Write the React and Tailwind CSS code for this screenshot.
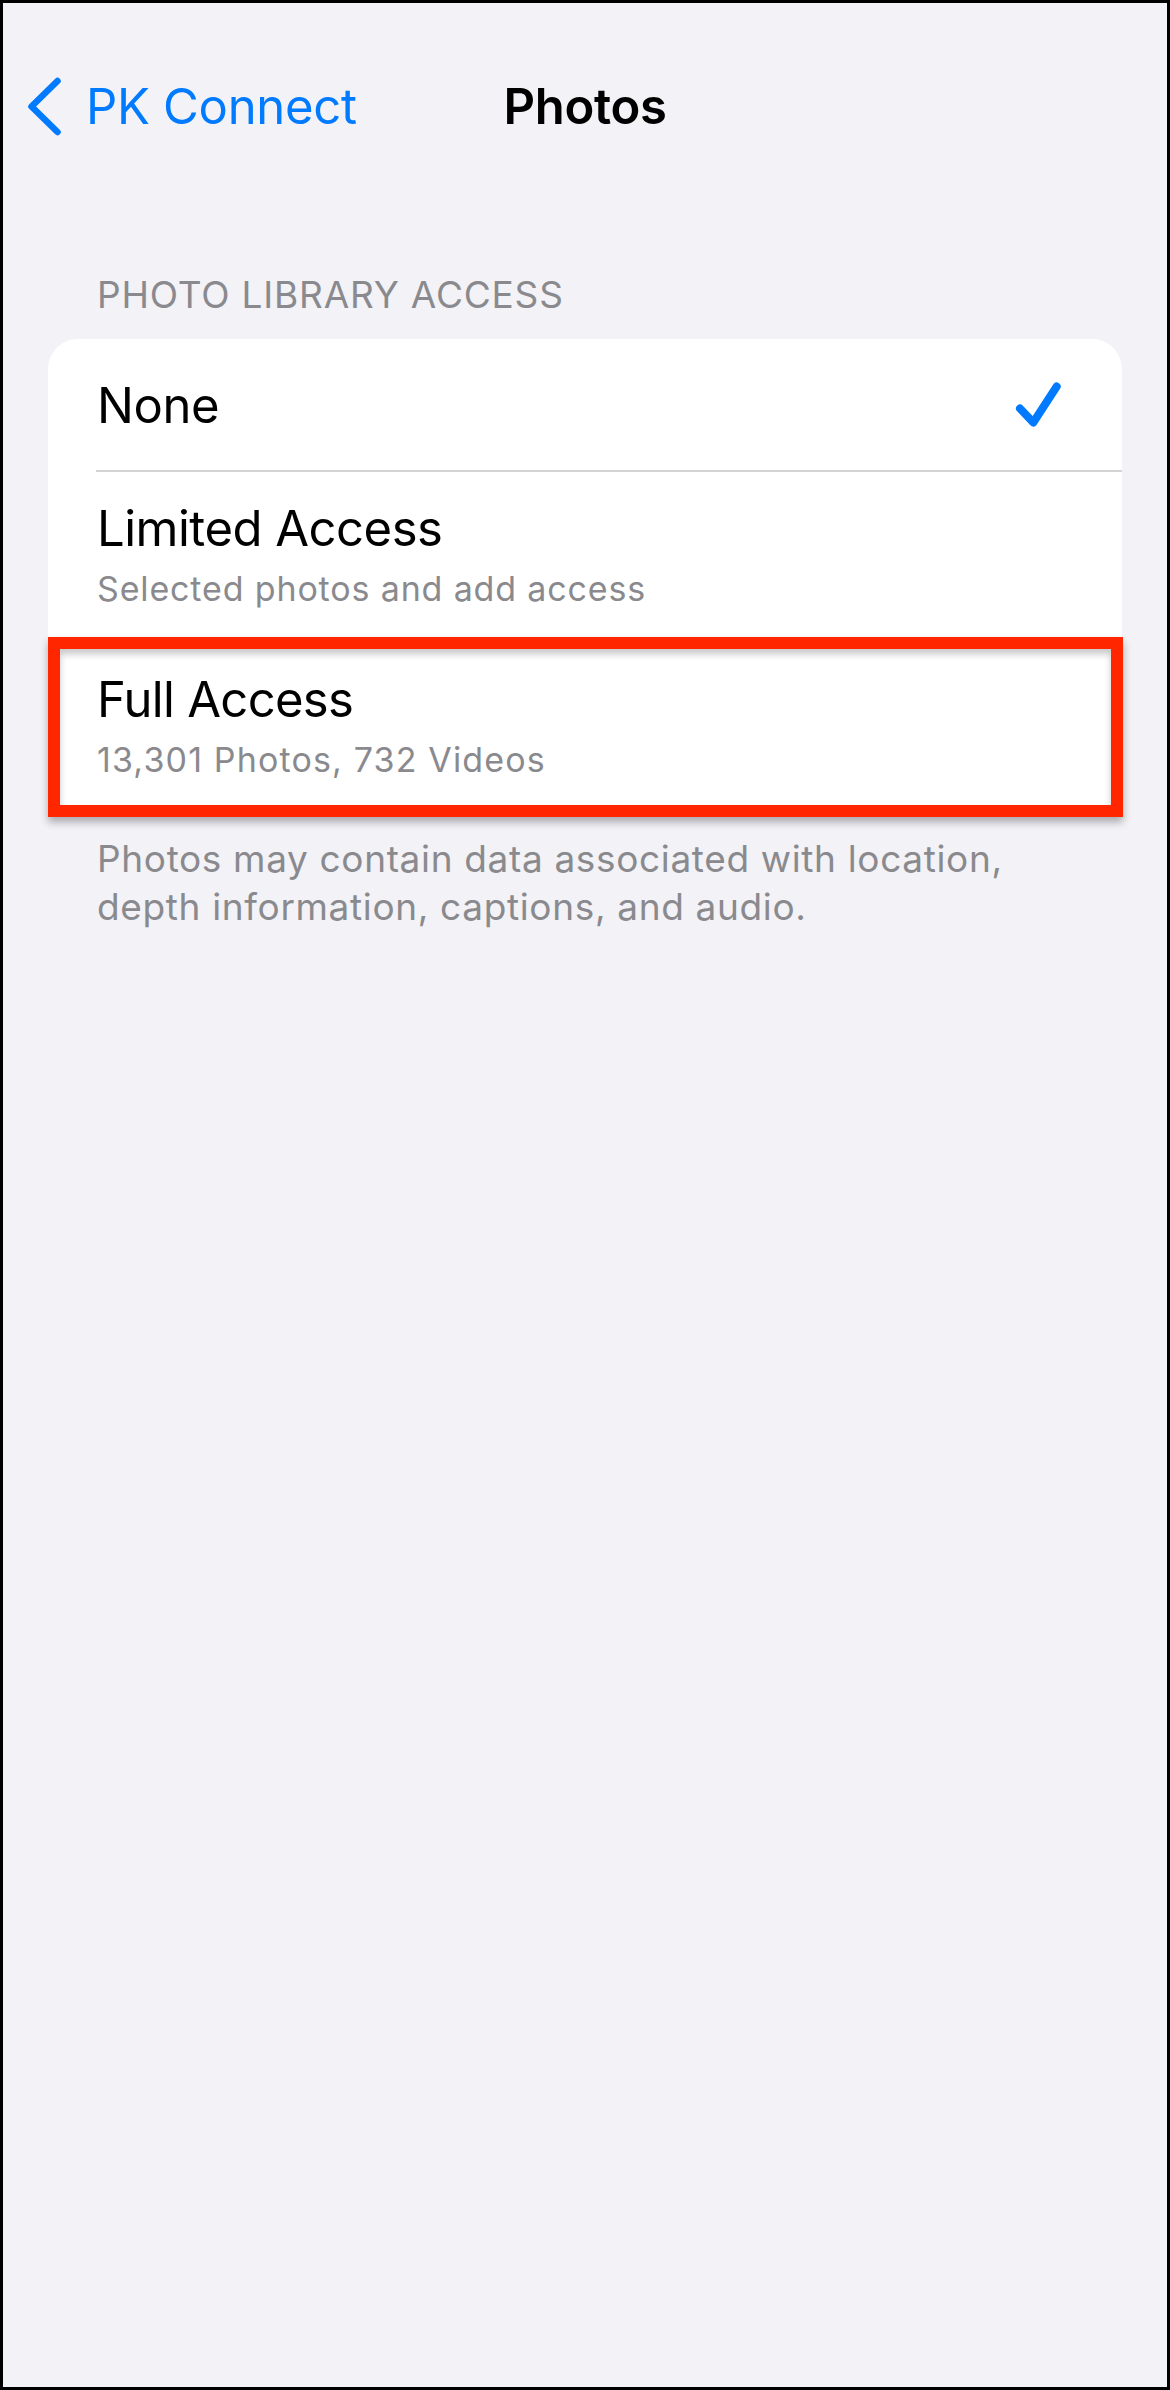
import React from "react";

const ChevronLeft = () => (
  <svg width="40" height="60" viewBox="0 0 40 60" fill="none">
    <path
      d="M33.5 4 L7.5 29.5 L33.5 55"
      stroke="#007aff"
      strokeWidth="6.5"
      strokeLinecap="round"
      strokeLinejoin="round"
    />
  </svg>
);

const Check = () => (
  <svg width="56" height="56" viewBox="0 0 56 56" fill="none">
    <path
      d="M10 31.5 L23.3 45.5 L46.7 9.5"
      stroke="#007aff"
      strokeWidth="8"
      strokeLinecap="round"
      strokeLinejoin="round"
    />
  </svg>
);

const App = () => {
  return (
    <div className="h-[2390px] w-full border-[3px] border-black bg-[#f2f2f7] font-['Inter','Liberation_Sans',sans-serif] antialiased">
      {/* Navigation bar */}
      <nav className="grid grid-cols-[1fr_auto_1fr] items-center pt-[74px]">
        <div className="flex items-center pl-[21px]">
          <ChevronLeft />
          <span className="ml-[22px] text-[49px] leading-[60px] tracking-[-0.3px] text-[#007aff]">
            PK Connect
          </span>
        </div>
        <h1 className="text-[49px] leading-[60px] font-semibold tracking-[-0.3px] text-black">
          Photos
        </h1>
        <div />
      </nav>

      {/* Section header */}
      <h2 className="mt-[136px] pl-[94px] text-[37px] leading-[44px] tracking-[0.8px] uppercase text-[#8a8a8e]">
        Photo Library Access
      </h2>

      {/* Options card */}
      <div className="mx-[45px] mt-[22px] rounded-[30px] bg-white">
        <div className="flex h-[131px] items-start justify-between pl-[49px] pr-[56px] pt-[37px]">
          <span className="text-[49px] leading-[60px] tracking-[-0.4px] text-black">None</span>
          <div className="self-center -mt-[37px]">
            <Check />
          </div>
        </div>
        <div className="ml-[48px] h-[2px] bg-[#d3d3d6]" />

        <div className="pl-[49px] pt-[27px] pb-[32px]">
          <p className="text-[49px] leading-[60px] tracking-[-0.5px] text-black">Limited Access</p>
          <p className="mt-[8px] text-[34px] leading-[44px] tracking-[0.85px] text-[#8a8a8e]">
            Selected photos and add access
          </p>
        </div>

        <div className="relative pl-[49px] pt-[27px] pb-[32px]">
          <p className="text-[49px] leading-[60px] tracking-[-0.7px] text-black">Full Access</p>
          <p className="mt-[8px] text-[34px] leading-[44px] tracking-[1.15px] text-[#8a8a8e]">
            13,301 Photos, 732 Videos
          </p>
          {/* highlight frame */}
          <div className="pointer-events-none absolute -top-[6px] -bottom-[3px] left-0 -right-[1px] border-[12px] border-[#ff2600] shadow-[0_5px_8px_rgba(0,0,0,0.3),inset_0_5px_7px_rgba(0,0,0,0.22)]" />
        </div>
      </div>

      {/* Footer note */}
      <p className="mt-[21px] pl-[94px] text-[37px] leading-[48px] tracking-[0.65px] text-[#8a8a8e]">
        Photos may contain data associated with location,
        <br />
        depth information, captions, and audio.
      </p>
    </div>
  );
};

export default App;
